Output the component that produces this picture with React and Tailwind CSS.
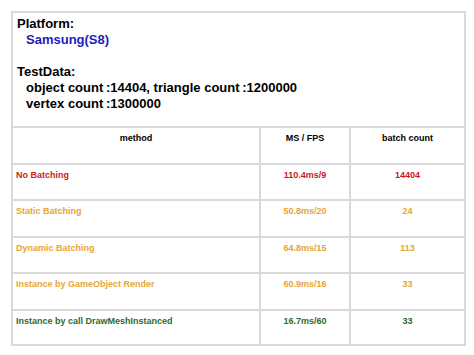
export default function App() {
  const rows = [
    { m: "No Batching", ms: "110.4ms/9", b: "14404", c: "text-[#cc1a1a]", h: "h-[36px]" },
    { m: "Static Batching", ms: "50.8ms/20", b: "24", c: "text-[#e8a534]", h: "h-[37px]" },
    { m: "Dynamic Batching", ms: "64.8ms/15", b: "113", c: "text-[#e8a534]", h: "h-[36px]" },
    { m: "Instance by GameObject Render", ms: "60.9ms/16", b: "33", c: "text-[#e8a534]", h: "h-[37px]" },
    { m: "Instance by call DrawMeshInstanced", ms: "16.7ms/60", b: "33", c: "text-[#2e6b2e]", h: "h-[35px]" },
  ];
  return (
    <div className="w-[474px] h-[355px] bg-white pt-[11px] pl-[11px] font-['Liberation_Sans',Arial,sans-serif] font-bold">
      <div className="w-[455px] border-2 border-[#d9d9d9]">
        <div className="h-[113px] pt-[3px] pl-[4px] text-[13px] leading-[16px] text-black">
          <div>Platform:</div>
          <div className="pl-[9px] text-[#1c1cc0]">Samsung(S8)</div>
          <div>&nbsp;</div>
          <div>TestData:</div>
          <div className="pl-[9px]">object count{"\u2009"}:14404, triangle count{"\u2009"}:1200000</div>
          <div className="pl-[9px]">vertex count{"\u2009"}:1300000</div>
        </div>
        <div className="grid grid-cols-[246px_90px_1fr] text-[9px] leading-[12px]">
          <div className="h-[37px] border-t-2 border-[#d9d9d9] pt-[4px] text-center text-black">method</div>
          <div className="h-[37px] border-t-2 border-l-2 border-[#d9d9d9] pt-[4px] text-center text-black">MS / FPS</div>
          <div className="h-[37px] border-t-2 border-l-2 border-[#d9d9d9] pt-[4px] text-center text-black">batch count</div>
          {rows.map((r) => (
            <div key={r.m} className="contents">
              <div className={`${r.h} border-t-2 border-[#d9d9d9] pt-[4px] pl-[3px] ${r.c}`}>{r.m}</div>
              <div className={`${r.h} border-t-2 border-l-2 border-[#d9d9d9] pt-[4px] text-center ${r.c}`}>{r.ms}</div>
              <div className={`${r.h} border-t-2 border-l-2 border-[#d9d9d9] pt-[4px] text-center ${r.c}`}>{r.b}</div>
            </div>
          ))}
        </div>
      </div>
    </div>
  );
}
